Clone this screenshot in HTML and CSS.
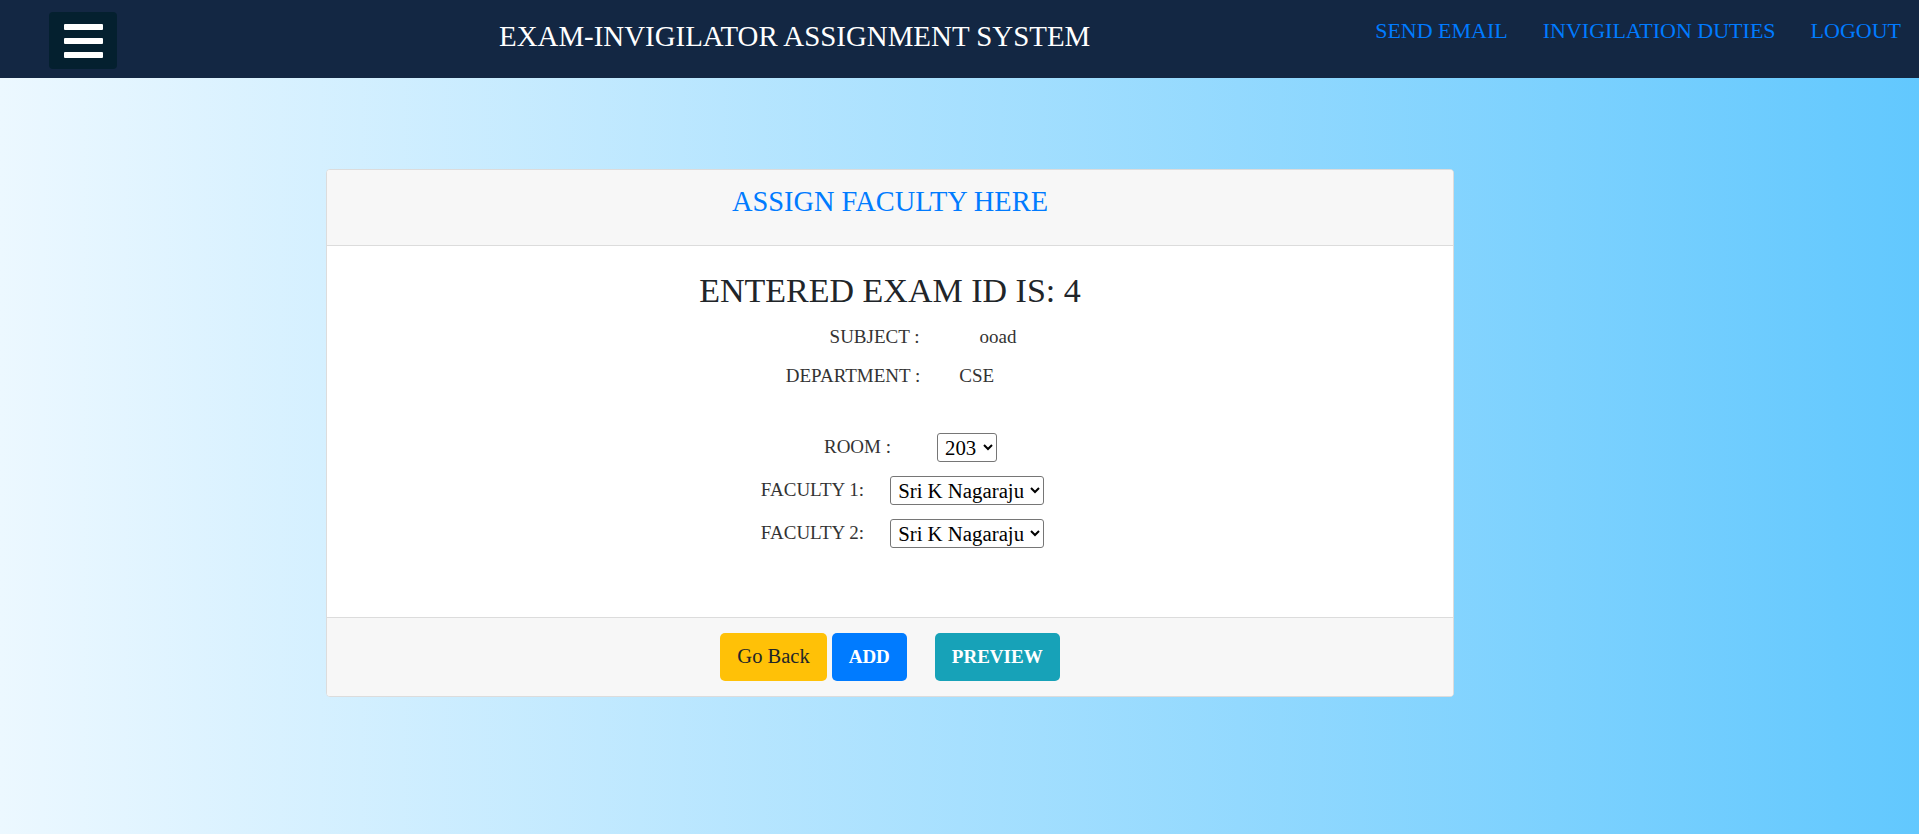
FILE: index.html
```html
<!DOCTYPE html>
<html lang="en">
<head>
    <meta charset="UTF-8">
    <meta name="viewport" content="width=device-width, initial-scale=1.0">
    <title>Exam-Invigilator Assignment System</title>

    <link rel="stylesheet" href="styles.css">
</head>
<body>
    <nav class="topbar">
        <button class="menu-toggle" type="button">
            <span class="menu-bar"></span>
            <span class="menu-bar"></span>
            <span class="menu-bar"></span>
        </button>
        <h1 class="brand">EXAM-INVIGILATOR ASSIGNMENT SYSTEM</h1>
        <ul class="nav-links">
            <li><a href="#">SEND EMAIL</a></li>
            <li><a href="#">INVIGILATION DUTIES</a></li>
            <li><a href="#">LOGOUT</a></li>
        </ul>
    </nav>

    <main class="page">
        <div class="card">
            <div class="card-header">
                <h4>ASSIGN FACULTY HERE</h4>
            </div>

            <div class="card-body">
                <h3 class="exam-title">ENTERED EXAM ID IS: 4</h3>

                <div class="info">
                    <div class="info-row info-row--subject">
                        <span>SUBJECT :</span>
                        <span>ooad</span>
                    </div>
                    <div class="info-row info-row--dept">
                        <span>DEPARTMENT :</span>
                        <span>CSE</span>
                    </div>
                </div>

                <form class="assign-form">
                    <div class="field-row field-row--room">
                        <label for="room">ROOM :</label>
                        <select id="room" class="field-select">
                            <option>203</option>
                        </select>
                    </div>
                    <div class="field-row field-row--faculty">
                        <label for="faculty1">FACULTY 1:</label>
                        <select id="faculty1" class="field-select">
                            <option>Sri K Nagaraju</option>
                        </select>
                    </div>
                    <div class="field-row field-row--faculty">
                        <label for="faculty2">FACULTY 2:</label>
                        <select id="faculty2" class="field-select">
                            <option>Sri K Nagaraju</option>
                        </select>
                    </div>
                </form>
            </div>

            <div class="card-footer">
                <button class="btn btn-warning" type="button">Go Back</button>
                <button class="btn btn-primary" type="button">ADD</button>
                <button class="btn btn-info" type="button">PREVIEW</button>
            </div>
        </div>
    </main>
</body>
</html>
```

FILE: styles.css
```css
:root {
    --navy: #132743;
    --blue: #007bff;
    --text: #212529;
    --muted: #333;
    --line: #dcdcdc;
    --soft: #f7f7f7;
}

* {
    margin: 0;
    padding: 0;
    box-sizing: border-box;
}

html, body {
    min-height: 100%;
}

body {
    min-height: 100vh;
    font-family: 'Liberation Serif', 'Times New Roman', serif;
    color: var(--text);
    background: linear-gradient(to right, #ecf8ff, #62c8fe);
}

/* top bar */

.topbar {
    display: flex;
    align-items: flex-start;
    height: 78px;
    padding: 0 18px 0 49px;
    background-color: var(--navy);
}

.menu-toggle {
    display: flex;
    flex-direction: column;
    align-items: center;
    justify-content: center;
    gap: 8px;
    width: 68px;
    height: 57px;
    margin-top: 12px;
    border: none;
    border-radius: 4px;
    background-color: #04202f;
    cursor: pointer;
}

.menu-bar {
    display: block;
    width: 39px;
    height: 6px;
    border-radius: 1px;
    background-color: #fff;
}

.brand {
    margin: 19px 0 0 382px;
    font-size: 28.9px;
    font-weight: normal;
    line-height: 1.2;
    color: #fff;
}

.nav-links {
    display: flex;
    gap: 35px;
    margin: 14px 0 0 auto;
    list-style: none;
}

.nav-links a {
    font-size: 22px;
    line-height: 1.5;
    color: var(--blue);
    text-decoration: none;
}

/* card */

.page {
    padding: 91px 0 0 326px;
}

.card {
    width: 1128px;
    border: 1px solid var(--line);
    border-radius: 4px;
    background-color: #fff;
    overflow: hidden;
}

.card-header {
    padding: 15px 20px 26px;
    border-bottom: 1px solid var(--line);
    background-color: var(--soft);
    text-align: center;
}

.card-header h4 {
    font-size: 28.4px;
    font-weight: normal;
    line-height: 1.2;
    color: var(--blue);
}

.card-body {
    padding: 25px 20px 69px;
    font-size: 19px;
    line-height: 1.5;
    color: var(--muted);
}

.exam-title {
    margin-bottom: 11px;
    font-size: 34px;
    font-weight: normal;
    line-height: 1.2;
    text-align: center;
    color: var(--text);
}

.info {
    margin-bottom: 42px;
}

.info-row {
    display: flex;
    justify-content: center;
}

.info-row + .info-row {
    margin-top: 11px;
}

.info-row--subject {
    gap: 60px;
    padding-left: 66px;
}

.info-row--dept {
    gap: 39px;
}

.field-row {
    display: flex;
    align-items: center;
    justify-content: center;
    height: 29px;
}

.field-row + .field-row {
    margin-top: 14px;
}

.field-row--room {
    gap: 46px;
    padding-left: 41px;
}

.field-row--faculty {
    gap: 26px;
    padding-left: 25px;
}

.field-select {
    height: 29px;
    padding: 0 3px;
    border: 1px solid #767676;
    border-radius: 3px;
    background-color: #fff;
    font-family: inherit;
    font-size: 20.8px;
    color: #000;
}

.card-footer {
    display: flex;
    justify-content: center;
    gap: 5px;
    padding: 15px 20px;
    border-top: 1px solid var(--line);
    background-color: var(--soft);
}

.btn {
    padding: 8px 16px;
    border: 1px solid transparent;
    border-radius: 5px;
    font-family: inherit;
    font-size: 20.5px;
    line-height: 1.45;
    cursor: pointer;
}

.btn-warning {
    background-color: #ffc107;
    color: var(--text);
}

.btn-primary {
    background-color: var(--blue);
    color: #fff;
    font-size: 19px;
    line-height: 1.58;
    font-weight: bold;
}

.btn-info {
    margin-left: 23px;
    background-color: #17a2b8;
    color: #fff;
    font-size: 19px;
    line-height: 1.58;
    font-weight: bold;
}
```
